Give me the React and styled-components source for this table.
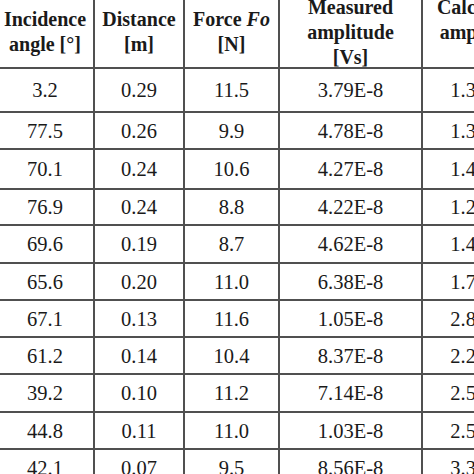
import React from "react";
import styled, { createGlobalStyle } from "styled-components";

const GlobalStyle = createGlobalStyle`
  html, body {
    margin: 0;
    padding: 0;
    background: #ffffff;
    overflow: hidden;
  }
  body {
    width: 474px;
    height: 474px;
  }
`;

const Page = styled.div`
  width: 474px;
  height: 474px;
  overflow: hidden;
  background: #ffffff;
`;

const Table = styled.table`
  width: 548px;
  min-width: 548px;
  border-collapse: collapse;
  table-layout: fixed;
  margin-left: -5px;
  margin-top: -5px;
  font-family: "Liberation Serif", "Times New Roman", serif;
  color: #1a1a1a;
`;

const Col = styled.col`
  width: ${(p) => p.$w}px;
`;

const HeadCell = styled.th`
  height: 70px;
  padding: 0;
  font-family: "Liberation Serif", "Times New Roman", serif;
  font-size: 20px;
  font-weight: bold;
  text-align: center;
  vertical-align: middle;
  border: 2px solid #505050;
  white-space: nowrap;
  overflow: hidden;
`;

const HeadText = styled.div`
  line-height: 25px;
  margin: -3px 0;
`;

const Cell = styled.td`
  padding: 0;
  font-family: "Liberation Serif", "Times New Roman", serif;
  font-size: 20.5px;
  line-height: 24px;
  text-align: center;
  vertical-align: middle;
  border: 2px solid #505050;
  white-space: nowrap;
  overflow: hidden;
`;

const Row = styled.tr`
  height: ${(p) => p.$h}px;
`;

const Symbol = styled.i`
  font-weight: bold;
`;

const rows = [
  ["3.2", "0.29", "11.5", "3.79E-8", "1.34E-8", 44],
  ["77.5", "0.26", "9.9", "4.78E-8", "1.36E-8", 37],
  ["70.1", "0.24", "10.6", "4.27E-8", "1.44E-8", 40],
  ["76.9", "0.24", "8.8", "4.22E-8", "1.21E-8", 36],
  ["69.6", "0.19", "8.7", "4.62E-8", "1.49E-8", 38],
  ["65.6", "0.20", "11.0", "6.38E-8", "1.74E-8", 37],
  ["67.1", "0.13", "11.6", "1.05E-8", "2.81E-8", 37],
  ["61.2", "0.14", "10.4", "8.37E-8", "2.29E-8", 37],
  ["39.2", "0.10", "11.2", "7.14E-8", "2.51E-8", 38],
  ["44.8", "0.11", "11.0", "1.03E-8", "2.56E-8", 37],
  ["42.1", "0.07", "9.5", "8.56E-8", "3.31E-8", 37],
];

export default function App() {
  return (
    <Page>
      <GlobalStyle />
      <Table>
        <colgroup>
          <Col $w={98} />
          <Col $w={90} />
          <Col $w={95} />
          <Col $w={143} />
          <Col $w={122} />
        </colgroup>
        <thead>
          <tr>
            <HeadCell>
              <HeadText>
                Incidence
                <br />
                angle [°]
              </HeadText>
            </HeadCell>
            <HeadCell>
              <HeadText>
                Distance
                <br />
                [m]
              </HeadText>
            </HeadCell>
            <HeadCell>
              <HeadText>
                Force <Symbol>Fo</Symbol>
                <br />
                [N]
              </HeadText>
            </HeadCell>
            <HeadCell>
              <HeadText>
                Measured
                <br />
                amplitude
                <br />
                [Vs]
              </HeadText>
            </HeadCell>
            <HeadCell>
              <HeadText>
                Calculated
                <br />
                amplitude
                <br />
                {"\u00a0"}
              </HeadText>
            </HeadCell>
          </tr>
        </thead>
        <tbody>
          {rows.map((r) => (
            <Row key={r[0]} $h={r[5]}>
              <Cell>{r[0]}</Cell>
              <Cell>{r[1]}</Cell>
              <Cell>{r[2]}</Cell>
              <Cell>{r[3]}</Cell>
              <Cell>{r[4]}</Cell>
            </Row>
          ))}
        </tbody>
      </Table>
    </Page>
  );
}
